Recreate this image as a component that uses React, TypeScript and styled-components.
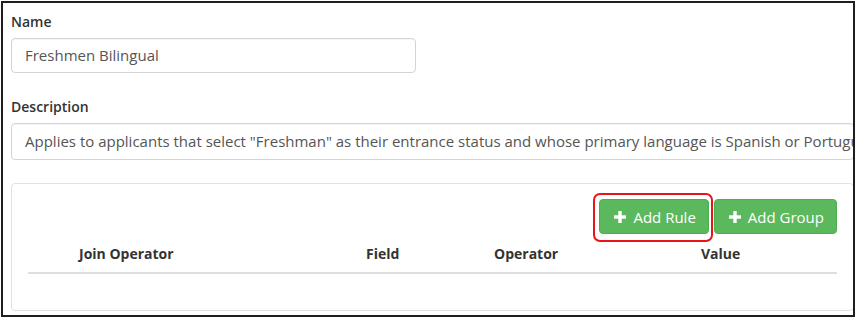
import React from "react";
import styled, { createGlobalStyle } from "styled-components";

const Global = createGlobalStyle`
  html, body { margin: 0; padding: 0; background: #fff; }
  body { font-family: "Open Sans", "Liberation Sans", sans-serif; color: #333; }
  * { box-sizing: border-box; }
`;

const Frame = styled.div`
  margin: 1px 0 0 1px;
  width: 854px;
  height: 316px;
  border: 2px solid #1e1e1e;
  overflow: hidden;
  background: #fff;
`;

const Content = styled.div`
  width: 843px;
  padding: 9px 0 0 8px;
  box-sizing: content-box;
`;

const Field = styled.div<{ $gap?: number }>`
  display: flex;
  flex-direction: column;
  margin-bottom: ${(p) => p.$gap ?? 0}px;
`;

const Label = styled.label`
  font-size: 14px;
  font-weight: 600;
  line-height: 20px;
  color: #333;
  margin-bottom: 6px;
`;

const TextInput = styled.div<{ $width?: string; $height?: number }>`
  width: ${(p) => p.$width ?? "100%"};
  height: ${(p) => p.$height ?? 36}px;
  border: 1px solid #d4d4d4;
  border-radius: 4px;
  padding: 0 13px;
  font-size: 15px;
  line-height: ${(p) => (p.$height ?? 36) - 2}px;
  color: #555;
  white-space: nowrap;
  overflow: hidden;
  box-shadow: inset 0 1px 1px rgba(0, 0, 0, 0.04);
`;

const Panel = styled.div`
  border: 1px solid #e2e2e2;
  border-radius: 4px;
  padding: 15px 16px 0 16px;
  height: 128px;
`;

const Toolbar = styled.div`
  display: flex;
  justify-content: flex-end;
  gap: 5px;
`;

const ButtonWrap = styled.div`
  position: relative;
`;

const Highlight = styled.span`
  position: absolute;
  top: -6px;
  left: -6px;
  right: -4px;
  bottom: -8px;
  border: 2px solid #e8141b;
  border-radius: 7px;
  pointer-events: none;
`;

const GreenButton = styled.button`
  display: inline-flex;
  align-items: center;
  gap: 7px;
  height: 35px;
  padding: 0 12px 0 14px;
  background: #5cb85c;
  border: 1px solid #4cae4c;
  border-radius: 4px;
  color: #fff;
  font-family: "Open Sans", "Liberation Sans", sans-serif;
  font-size: 15px;
  cursor: pointer;
`;

const HeaderRow = styled.div`
  display: grid;
  grid-template-columns: 287px 128px 207px 1fr;
  padding: 10px 0 8px 51px;
  border-bottom: 2px solid #dedede;
`;

const HeaderCell = styled.div`
  font-size: 14px;
  font-weight: 700;
  line-height: 20px;
  color: #333;
`;

const PlusIcon = () => (
  <svg width="12" height="12" viewBox="0 0 12 12" aria-hidden="true">
    <rect x="4.3" y="0" width="3.4" height="12" fill="#fff" />
    <rect x="0" y="4.3" width="12" height="3.4" fill="#fff" />
  </svg>
);

export default function App() {
  return (
    <>
      <Global />
      <Frame>
        <Content>
          <Field $gap={24}>
            <Label>Name</Label>
            <TextInput $width="405px" $height={35}>Freshmen Bilingual</TextInput>
          </Field>
          <Field $gap={23}>
            <Label>Description</Label>
            <TextInput $height={37}>
              Applies to applicants that select "Freshman" as their entrance status and whose primary language is Spanish or Portuguese
            </TextInput>
          </Field>
          <Panel>
            <Toolbar>
              <ButtonWrap>
                <GreenButton>
                  <PlusIcon />
                  Add Rule
                </GreenButton>
                <Highlight />
              </ButtonWrap>
              <ButtonWrap>
                <GreenButton>
                  <PlusIcon />
                  Add Group
                </GreenButton>
              </ButtonWrap>
            </Toolbar>
            <HeaderRow>
              <HeaderCell>Join Operator</HeaderCell>
              <HeaderCell>Field</HeaderCell>
              <HeaderCell>Operator</HeaderCell>
              <HeaderCell>Value</HeaderCell>
            </HeaderRow>
          </Panel>
        </Content>
      </Frame>
    </>
  );
}
